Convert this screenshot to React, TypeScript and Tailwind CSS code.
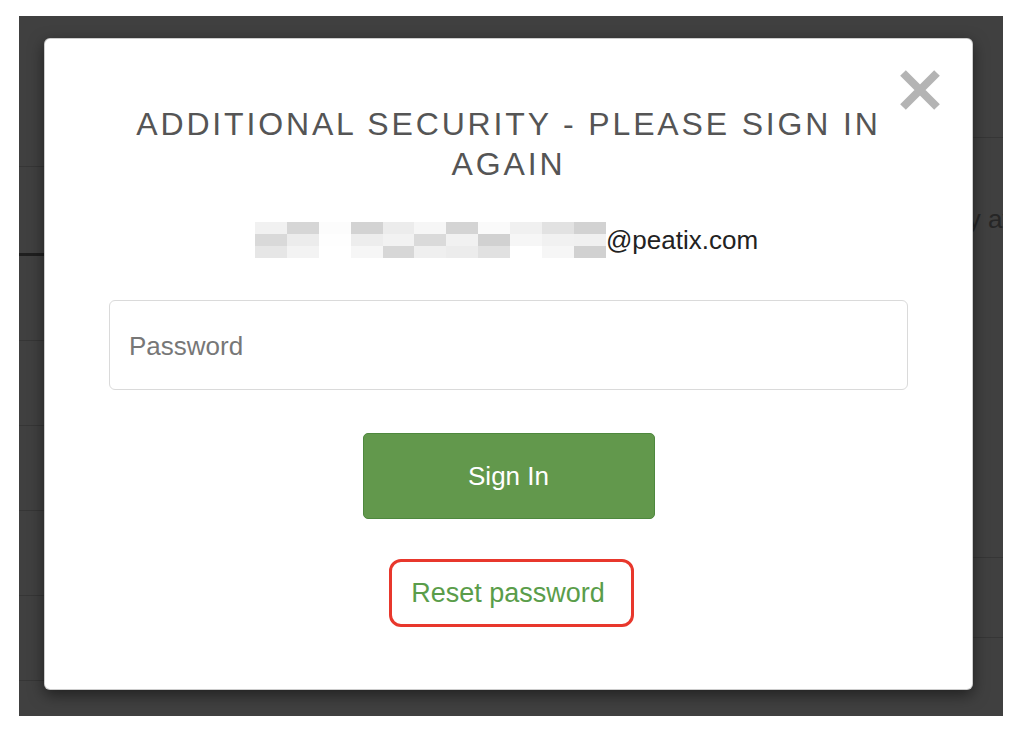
import React from 'react';

// mosaic that hides the local part of the email, 11 columns x 3 rows
const mosaic: string[][] = [
  ['bg-[#f1f1f1]', 'bg-[#d6d6d6]', 'bg-[#fcfcfc]', 'bg-[#d3d3d3]', 'bg-[#ececec]', 'bg-[#f6f6f6]', 'bg-[#d4d4d4]', 'bg-[#fafafa]', 'bg-[#f0f0f0]', 'bg-[#e2e2e2]', 'bg-[#d2d2d2]'],
  ['bg-[#d9d9d9]', 'bg-[#ececec]', 'bg-[#fefefe]', 'bg-[#ededed]', 'bg-[#f2f2f2]', 'bg-[#dadada]', 'bg-[#f1f1f1]', 'bg-[#d1d1d1]', 'bg-[#f6f6f6]', 'bg-[#f1f1f1]', 'bg-[#f0f0f0]'],
  ['bg-[#e6e6e6]', 'bg-[#f3f3f3]', 'bg-[#ffffff]', 'bg-[#f6f6f6]', 'bg-[#d7d7d7]', 'bg-[#efefef]', 'bg-[#ececec]', 'bg-[#e1e1e1]', 'bg-[#ffffff]', 'bg-[#f6f6f6]', 'bg-[#d1d1d1]'],
];

const font = { fontFamily: '"Liberation Sans", Arial, Helvetica, sans-serif' };

export default function App() {
  return (
    <div className="min-h-[734px] w-[1022px] bg-white pt-[16px] pl-[19px]" style={font}>
      {/* dimmed page behind the dialog */}
      <div className="relative w-[984px] h-[700px] bg-[#404040] overflow-hidden">
        <div className="absolute inset-0 flex justify-between">
          <div className="w-[160px] flex flex-col">
            <div className="h-[151px] border-b border-[#363636]" />
            <div className="h-[89px] border-b-[3px] border-[#1f1f1f]" />
            <div className="h-[85px] border-b border-[#363636]" />
            <div className="h-[85px] border-b border-[#363636]" />
            <div className="h-[85px] border-b border-[#363636]" />
            <div className="h-[85px] border-b border-[#363636]" />
            <div className="h-[85px] border-b border-[#363636]" />
          </div>
          <div className="w-[119px] flex flex-col">
            <div className="h-[122px] border-b border-[#363636]" />
            <div className="h-[420px] border-b border-[#363636] pt-[62px] whitespace-nowrap text-[26px] text-[#262626]">
              Quantity available
            </div>
            <div className="h-[80px] border-b border-[#363636]" />
          </div>
        </div>

        {/* dialog */}
        <div className="absolute left-[25px] top-[22px] w-[929px] h-[652px] bg-white rounded-[6px] border border-black/20 shadow-[0_5px_15px_rgba(0,0,0,0.5)] flex flex-col items-center pt-[65px] px-[64px]">
          <button className="absolute right-[32px] top-[31px] w-[40px] h-[40px]" aria-label="Close">
            <svg viewBox="0 0 40 40" className="w-[40px] h-[40px]">
              <path d="M3 3 L37 37 M37 3 L3 37" stroke="#b4b4b4" strokeWidth="8" fill="none" />
            </svg>
          </button>

          <h2 className="w-full text-center text-[32px] leading-[40px] tracking-[2.85px] text-[#555555] font-normal">
            ADDITIONAL SECURITY - PLEASE SIGN IN AGAIN
          </h2>

          <div className="mt-[38px] mr-[4px] h-[36px] flex items-center">
            <div className="w-[351px] h-[36px] grid grid-cols-11 grid-rows-3">
              {mosaic.flat().map((c, i) => (
                <div key={i} className={c} />
              ))}
            </div>
            <span className="text-[26px] leading-[36px] text-[#222222]">@peatix.com</span>
          </div>

          <input
            type="password"
            placeholder="Password"
            className="mt-[42px] w-full h-[90px] border-[1.5px] border-[#dadada] rounded-[6px] pl-[19px] pr-[19px] pt-[3px] text-[26px] text-[#333] placeholder:text-[#777777] outline-none"
          />

          <button className="mt-[43px] w-[292px] h-[86px] bg-[#62984c] border border-[#4e883e] rounded-[5px] text-white text-[26px]">
            Sign In
          </button>

          <div className="mt-[40px] ml-[5px] w-[245px] h-[68px] pr-[6px] border-[3px] border-[#e8372c] rounded-[12px] flex items-center justify-center">
            <a className="text-[27px] text-[#5a9d4a] cursor-pointer">Reset password</a>
          </div>
        </div>
      </div>
    </div>
  );
}
